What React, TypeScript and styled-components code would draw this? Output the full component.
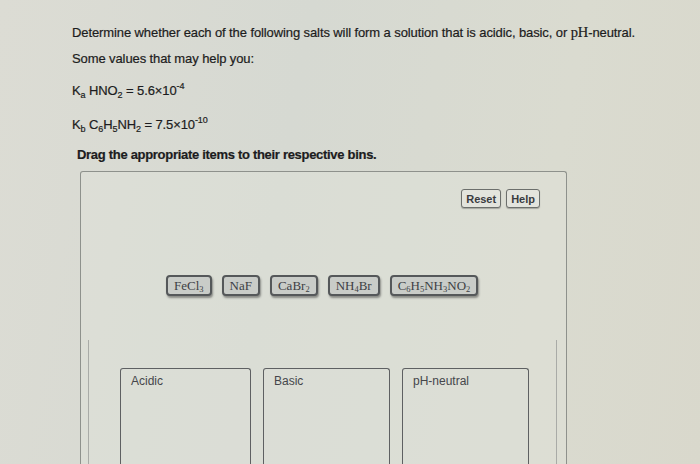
import React from "react"
import styled, { createGlobalStyle } from "styled-components"

const GlobalStyle = createGlobalStyle`
  html, body {
    margin: 0;
    padding: 0;
  }
  body {
    width: 700px;
    height: 464px;
    overflow: hidden;
    background: linear-gradient(100deg, #dcdcd4 0%, #d6d9d2 40%, #dadbd0 75%, #d9d8cc 100%);
    font-family: "Liberation Sans", Arial, sans-serif;
    color: #1c1c20;
  }
`

const Page = styled.div`
  padding: 23px 0 0 72px;
  height: 441px;
  overflow: hidden;
`

const Line = styled.div<{ $gap: number; $bold?: boolean; $indent?: number }>`
  margin-top: ${p => p.$gap}px;
  margin-left: ${p => p.$indent || 0}px;
  font-size: 13px;
  line-height: 18px;
  letter-spacing: ${p => (p.$bold ? -0.3 : -0.1)}px;
  font-weight: ${p => (p.$bold ? 700 : 400)};
  white-space: nowrap;
  -webkit-text-stroke: 0.2px #1c1c20;
`

const Serif = styled.span`
  font-family: "Liberation Serif", "Times New Roman", serif;
  font-size: 14.5px;
`

const Sub = styled.sub`
  font-size: 9px;
  vertical-align: -3px;
  line-height: 0;
`

const Sup = styled.sup`
  font-size: 9px;
  vertical-align: 6px;
  line-height: 0;
`

const Panel = styled.div`
  margin: 7px 0 0 8px;
  width: 487px;
  height: 300px;
  border: 1px solid #8e918c;
  border-bottom: none;
  border-radius: 3px 3px 0 0;
  background: rgba(226, 228, 222, 0.35);
  box-sizing: border-box;
  display: flex;
  flex-direction: column;
`

const Toolbar = styled.div`
  display: flex;
  justify-content: flex-end;
  gap: 5px;
  padding: 17px 26px 0 0;
`

const ToolButton = styled.button`
  height: 19px;
  padding: 0 4px;
  border: 1.5px solid #6c6f6c;
  border-radius: 3px;
  background: #e3e4dd;
  font-family: "Liberation Sans", Arial, sans-serif;
  font-weight: 700;
  font-size: 11px;
  color: #3a3b3f;
  box-shadow: 0 1px 1px rgba(0, 0, 0, 0.25);
`

const Chips = styled.div`
  display: flex;
  gap: 10px;
  margin: 67px 0 0 85px;
`

const Chip = styled.div`
  height: 21px;
  padding: 0 6px;
  border: 2px solid #55585a;
  border-radius: 4px;
  background: #c9ccc8;
  box-shadow: 1px 2px 2px rgba(40, 40, 40, 0.45);
  font-family: "Liberation Serif", "Times New Roman", serif;
  font-size: 13px;
  line-height: 17px;
  color: #3d3f44;
  box-sizing: border-box;
  white-space: nowrap;
`

const ChipSub = styled.sub`
  font-size: 8.5px;
  vertical-align: -2px;
  line-height: 0;
`

const BinArea = styled.div`
  margin: 44px 9px 0 7px;
  flex: 1;
  border-left: 1px solid #a9aba7;
  border-right: 1px solid #a9aba7;
  display: flex;
  gap: 12px;
  padding: 28px 0 0 31px;
`

const Bin = styled.div<{ $w: number }>`
  width: ${p => p.$w}px;
  height: 120px;
  border: 1.5px solid #5e6062;
  border-bottom: none;
  border-radius: 3px 3px 0 0;
  box-sizing: border-box;
  padding: 5px 0 0 10px;
  font-size: 12px;
  color: #45464b;
  background: rgba(220, 222, 214, 0.4);
`

const App = () => {
  return (
    <>
      <GlobalStyle />
      <Page>
        <Line $gap={0}>
          Determine whether each of the following salts will form a solution that is acidic, basic, or{" "}
          <Serif>pH</Serif>-neutral.
        </Line>
        <Line $gap={8}>Some values that may help you:</Line>
        <Line $gap={14}>
          K<Sub>a</Sub> HNO<Sub>2</Sub> = 5.6×10<Sup>-4</Sup>
        </Line>
        <Line $gap={16}>
          K<Sub>b</Sub> C<Sub>6</Sub>H<Sub>5</Sub>NH<Sub>2</Sub> = 7.5×10<Sup>-10</Sup>
        </Line>
        <Line $gap={12} $bold $indent={5}>
          Drag the appropriate items to their respective bins.
        </Line>
        <Panel>
          <Toolbar>
            <ToolButton>Reset</ToolButton>
            <ToolButton>Help</ToolButton>
          </Toolbar>
          <Chips>
            <Chip>
              FeCl<ChipSub>3</ChipSub>
            </Chip>
            <Chip>NaF</Chip>
            <Chip>
              CaBr<ChipSub>2</ChipSub>
            </Chip>
            <Chip>
              NH<ChipSub>4</ChipSub>Br
            </Chip>
            <Chip>
              C<ChipSub>6</ChipSub>H<ChipSub>5</ChipSub>NH<ChipSub>3</ChipSub>NO<ChipSub>2</ChipSub>
            </Chip>
          </Chips>
          <BinArea>
            <Bin $w={131}>Acidic</Bin>
            <Bin $w={127}>Basic</Bin>
            <Bin $w={127}>pH-neutral</Bin>
          </BinArea>
        </Panel>
      </Page>
    </>
  )
}

export default App
